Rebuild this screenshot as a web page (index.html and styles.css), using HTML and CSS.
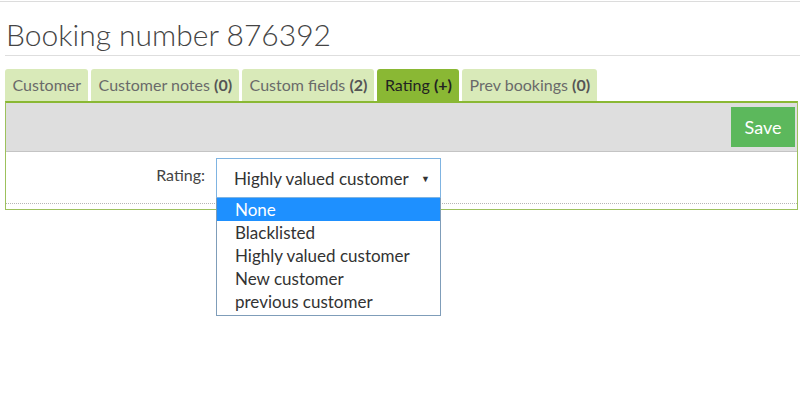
FILE: index.html
```html
<!DOCTYPE html>
<html lang="en">
  <head>
    <meta charset="UTF-8" />
    <meta name="viewport" content="width=device-width,initial-scale=1.0" />
    <title>Booking number 876392</title>
    <link rel="stylesheet" href="styles.css">
  </head>
  <body>
    <div class="page">
      <h1>Booking number 876392</h1>

      <ul class="tabs">
        <li>Customer</li>
        <li>Customer notes <b>(0)</b></li>
        <li>Custom fields <b>(2)</b></li>
        <li class="active">Rating <b>(+)</b></li>
        <li>Prev bookings <b>(0)</b></li>
      </ul>

      <div class="panel">
        <div class="toolbar">
          <button class="save">Save</button>
        </div>
        <div class="row">
          <label>Rating:</label>
          <div class="select">
            <div class="select-value">
              <span>Highly valued customer</span>
              <span class="arrow">&#9660;</span>
            </div>
            <ul class="options">
              <li class="selected">None</li>
              <li>Blacklisted</li>
              <li>Highly valued customer</li>
              <li>New customer</li>
              <li>previous customer</li>
            </ul>
          </div>
        </div>
      </div>
    </div>
  </body>
</html>
```

FILE: styles.css
```css
html, body {
  height: 100%;
}
body {
  margin: 0;
  min-height: 394px;
  font-family: Lato, "Open Sans", sans-serif;
  color: #333;
  background: #fff;
}
.page {
  border-top: 1px solid #dcdcdc;
  margin-top: 1px;
  padding: 0 0 0 5px;
}
h1 {
  margin: 15px 0 0 0;
  padding: 0 0 4px 1px;
  font-size: 30px;
  font-weight: 300;
  line-height: 34px;
  color: #444;
  border-bottom: 1px solid #dedede;
}
.tabs {
  list-style: none;
  display: flex;
  gap: 3px;
  margin: 13px 0 0 0;
  padding: 0;
}
.tabs li {
  height: 32px;
  line-height: 32px;
  padding: 0 7px 0 7.5px;
  font-size: 16px;
  color: #6a6a6a;
  background: #d9eab9;
  border-radius: 3px 3px 0 0;
}
.tabs li b {
  font-weight: 700;
  color: #555;
}
.tabs li.active {
  background: #8ab834;
  color: #222;
}
.tabs li.active b {
  color: #222;
}
.panel {
  width: 791px;
  border: 1px solid #9dc15c;
  border-top: 2px solid #8ab834;
  padding-bottom: 5px;
}
.toolbar {
  display: flex;
  justify-content: flex-end;
  background: #dedede;
  border-bottom: 1px solid #c4c4c4;
  padding: 4px 2px 4px 4px;
}
.save {
  width: 64px;
  height: 40px;
  border: 0;
  background: #5cb85c;
  color: #fff;
  font-family: Lato, "Open Sans", sans-serif;
  font-size: 18px;
  cursor: pointer;
}
.row {
  display: flex;
  align-items: flex-start;
  gap: 11px;
  padding-top: 6px;
  height: 45px;
  border-bottom: 1px dotted #b5b5b5;
}
.row label {
  width: 199px;
  text-align: right;
  font-size: 16px;
  color: #444;
  padding-top: 7px;
}
.select {
  position: relative;
  width: 225px;
}
.select-value {
  display: flex;
  justify-content: space-between;
  align-items: center;
  height: 38px;
  border: 1px solid #7fb4e2;
  padding: 0 10px 0 17px;
  font-size: 17px;
  color: #333;
  background: #fff;
}
.arrow {
  font-size: 9px;
  color: #333;
}
.options {
  position: absolute;
  z-index: 10;
  top: 40px;
  left: 0;
  width: 223px;
  margin: 0;
  padding: 0 0 2px 0;
  list-style: none;
  background: #fff;
  border: 1px solid #7f9db9;
  border-top: 0;
}
.options li {
  height: 23px;
  line-height: 23px;
  padding-left: 18px;
  font-size: 17px;
  color: #333;
}
.options li.selected {
  background: #1e90ff;
  color: #fff;
}
```
